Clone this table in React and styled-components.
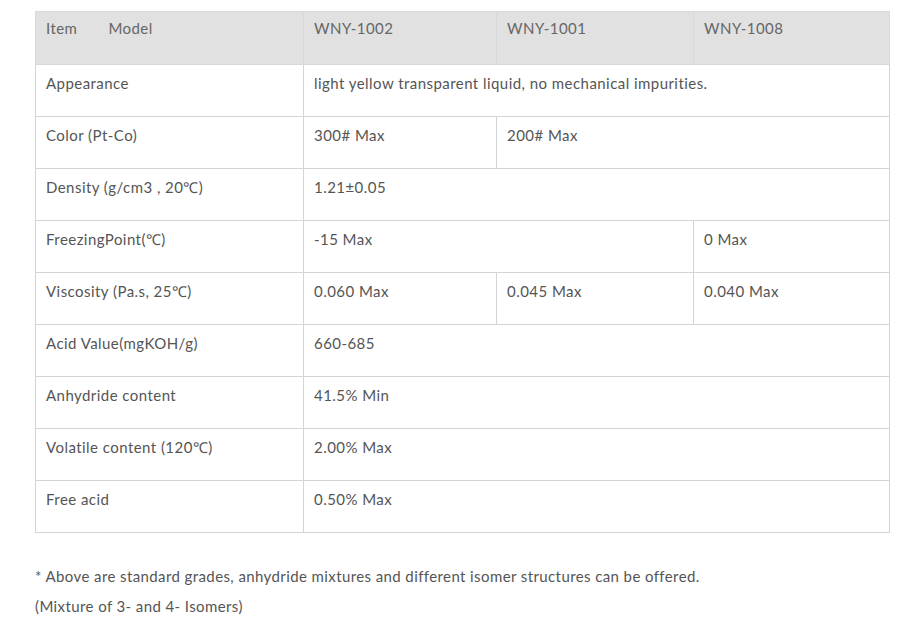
import React from 'react';
import styled, { createGlobalStyle } from 'styled-components';

const GlobalStyle = createGlobalStyle`
    html, body {
        margin: 0;
        padding: 0;
        background: #fff;
    }
    body {
        font-family: Lato, "Open Sans", sans-serif;
        color: #555;
    }
`;

const Page = styled.div`
    width: 900px;
    padding: 11px 11px 0 35px;
    box-sizing: border-box;
`;

const Table = styled.table`
    width: 854px;
    border-collapse: collapse;
    table-layout: fixed;
    border: 1px solid #cfcfcf;
    font-size: 15px;
    letter-spacing: 0.45px;
`;

const Col = styled.col`
    width: ${props => props.w}px;
`;

const HeadRow = styled.tr`
    height: 53px;
    background: #e1e1e1;
`;

const Row = styled.tr`
    height: 52px;
`;

const Cell = styled.td`
    border: 1px solid #d4d4d4;
    padding: 8px 10px 0;
    vertical-align: top;
    line-height: 20px;
    color: #555;
`;

const HeadCell = styled.th`
    border: 1px solid #d9d9d9;
    padding: 6px 10px 0;
    vertical-align: top;
    line-height: 20px;
    text-align: left;
    font-weight: normal;
    color: #666;
`;

const Gap = styled.span`
    display: inline-block;
    width: 31px;
`;

const Notes = styled.div`
    margin-top: 28px;
`;

const Note = styled.p`
    margin: 0;
    font-size: 15px;
    line-height: 30px;
    letter-spacing: 0.4px;
    color: #555;
`;

const widths = [268, 193, 197, 196];
const models = ['WNY-1002', 'WNY-1001', 'WNY-1008'];

const rows = [
    ['Appearance', [['light yellow transparent liquid, no mechanical impurities.', 3]]],
    ['Color (Pt-Co)', [['300# Max', 1], ['200# Max', 2]]],
    ['Density (g/cm3 , 20\u2103)', [['1.21\u00b10.05', 3]]],
    ['FreezingPoint(\u2103)', [['-15 Max', 2], ['0 Max', 1]]],
    ['Viscosity (Pa.s, 25\u2103)', [['0.060 Max', 1], ['0.045 Max', 1], ['0.040 Max', 1]]],
    ['Acid Value(mgKOH/g)', [['660-685', 3]]],
    ['Anhydride content', [['41.5% Min', 3]]],
    ['Volatile content (120\u2103)', [['2.00% Max', 3]]],
    ['Free acid', [['0.50% Max', 3]]],
];

const App = () => {
    return (
        <Page>
            <GlobalStyle />
            <Table>
                <colgroup>
                    {widths.map((w, i) => <Col key={i} w={w} />)}
                </colgroup>
                <thead>
                    <HeadRow>
                        <HeadCell>Item<Gap />Model</HeadCell>
                        {models.map(m => <HeadCell key={m}>{m}</HeadCell>)}
                    </HeadRow>
                </thead>
                <tbody>
                    {rows.map(([label, values]) => (
                        <Row key={label}>
                            <Cell>{label}</Cell>
                            {values.map(([v, span], i) => (
                                <Cell key={i} colSpan={span}>{v}</Cell>
                            ))}
                        </Row>
                    ))}
                </tbody>
            </Table>
            <Notes>
                <Note>* Above are standard grades, anhydride mixtures and different isomer structures can be offered.</Note>
                <Note>(Mixture of 3- and 4- Isomers)</Note>
            </Notes>
        </Page>
    );
};

export default App;
